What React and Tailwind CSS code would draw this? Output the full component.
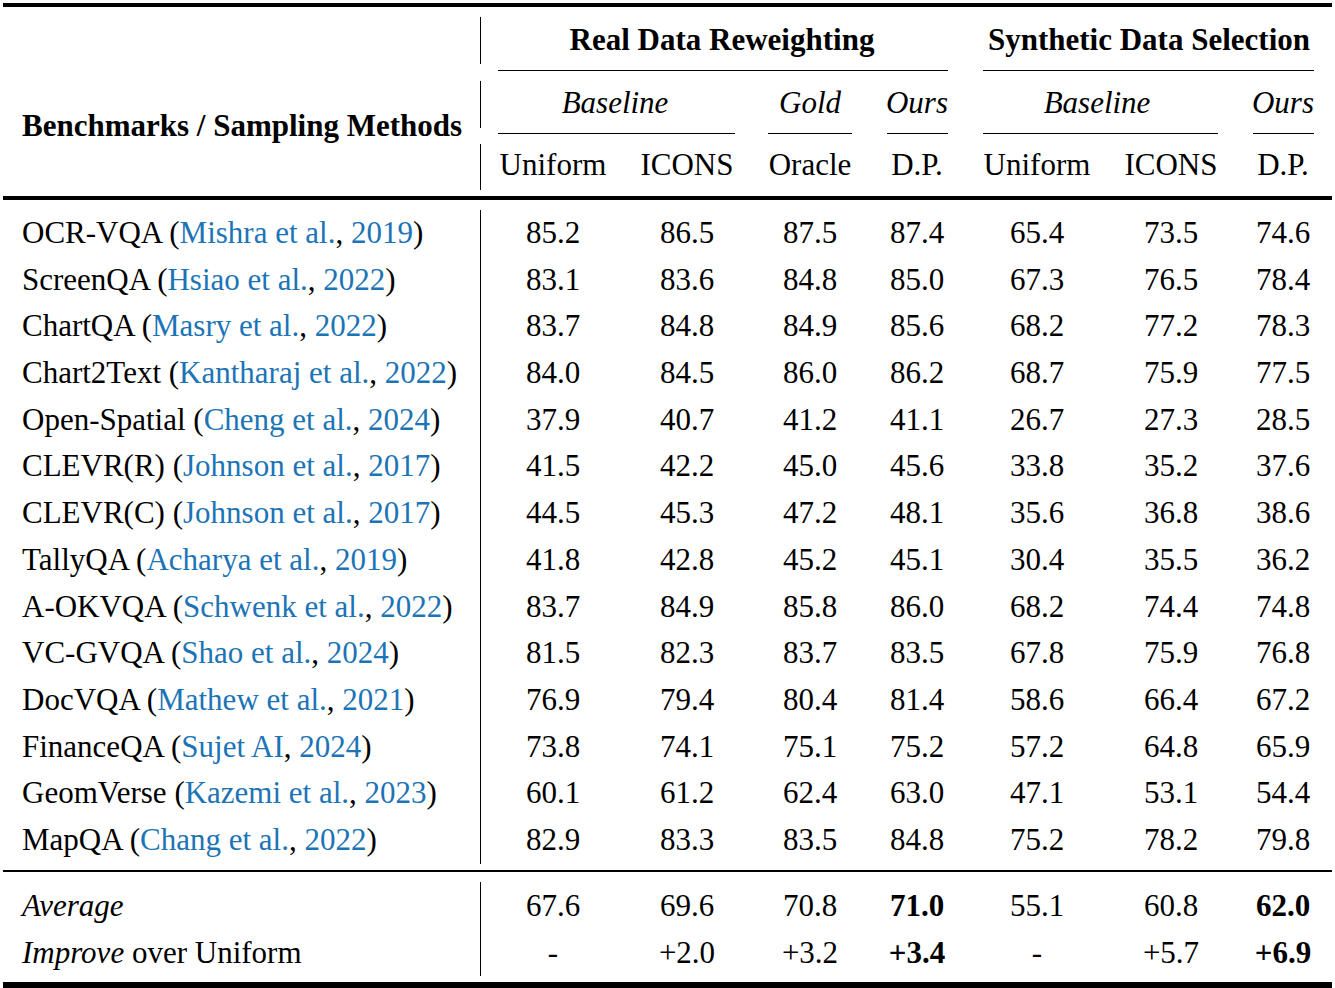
import React from 'react';

const cols = 'grid grid-cols-[144px_124px_122px_92px_148px_120px_104px]';
const rowCols = 'grid grid-cols-[481px_144px_124px_122px_92px_148px_120px_104px]';

const rows = [
  ['OCR-VQA', 'Mishra et al.', '2019', ['85.2', '86.5', '87.5', '87.4', '65.4', '73.5', '74.6']],
  ['ScreenQA', 'Hsiao et al.', '2022', ['83.1', '83.6', '84.8', '85.0', '67.3', '76.5', '78.4']],
  ['ChartQA', 'Masry et al.', '2022', ['83.7', '84.8', '84.9', '85.6', '68.2', '77.2', '78.3']],
  ['Chart2Text', 'Kantharaj et al.', '2022', ['84.0', '84.5', '86.0', '86.2', '68.7', '75.9', '77.5']],
  ['Open-Spatial', 'Cheng et al.', '2024', ['37.9', '40.7', '41.2', '41.1', '26.7', '27.3', '28.5']],
  ['CLEVR(R)', 'Johnson et al.', '2017', ['41.5', '42.2', '45.0', '45.6', '33.8', '35.2', '37.6']],
  ['CLEVR(C)', 'Johnson et al.', '2017', ['44.5', '45.3', '47.2', '48.1', '35.6', '36.8', '38.6']],
  ['TallyQA', 'Acharya et al.', '2019', ['41.8', '42.8', '45.2', '45.1', '30.4', '35.5', '36.2']],
  ['A-OKVQA', 'Schwenk et al.', '2022', ['83.7', '84.9', '85.8', '86.0', '68.2', '74.4', '74.8']],
  ['VC-GVQA', 'Shao et al.', '2024', ['81.5', '82.3', '83.7', '83.5', '67.8', '75.9', '76.8']],
  ['DocVQA', 'Mathew et al.', '2021', ['76.9', '79.4', '80.4', '81.4', '58.6', '66.4', '67.2']],
  ['FinanceQA', 'Sujet AI', '2024', ['73.8', '74.1', '75.1', '75.2', '57.2', '64.8', '65.9']],
  ['GeomVerse', 'Kazemi et al.', '2023', ['60.1', '61.2', '62.4', '63.0', '47.1', '53.1', '54.4']],
  ['MapQA', 'Chang et al.', '2022', ['82.9', '83.3', '83.5', '84.8', '75.2', '78.2', '79.8']],
];

const summary = [
  [<><i>Average</i></>, ['67.6', '69.6', '70.8', '71.0', '55.1', '60.8', '62.0']],
  [<><i>Improve</i> over Uniform</>, ['-', '+2.0', '+3.2', '+3.4', '-', '+5.7', '+6.9']],
];

function Cite({ who, year }) {
  return (
    <>
      (<span className="text-[#1c74b6]">{who}</span>, <span className="text-[#1c74b6]">{year}</span>)
    </>
  );
}

export default function App() {
  return (
    <div className="w-[1335px] h-[988px] bg-white text-black text-[31px] overflow-hidden pt-[3px]" style={{ fontFamily: '"Liberation Serif", "Times New Roman", serif' }}>
      <div className="mx-[3px] h-[4px] bg-black" />

      {/* header */}
      <div className="flex h-[189px]">
        <div className="flex w-[481px]">
          <div className="flex-1 pl-[22px] pt-[96px] leading-[46px] font-bold whitespace-nowrap">
            Benchmarks / Sampling Methods
          </div>
          <div className="flex flex-col w-[1.5px]">
            <div className="h-[64px] pt-[10px] pb-[7px]"><div className="h-full bg-black" /></div>
            <div className="h-[63px] pt-[10px] pb-[6px]"><div className="h-full bg-black" /></div>
            <div className="h-[62px] pt-[10px] pb-[6px]"><div className="h-full bg-black" /></div>
          </div>
        </div>
        <div className={`${cols} grid-rows-[63px_1px_62px_1px_62px] flex-1`}>
          <div className="col-span-4 flex items-center justify-center pt-[3px] font-bold">Real Data Reweighting</div>
          <div className="col-span-3 flex items-center justify-center pt-[3px] font-bold">Synthetic Data Selection</div>

          <div className="col-span-4 ml-[17px] mr-[15px] bg-black" />
          <div className="col-span-3 ml-[20px] mr-[21px] bg-black" />

          <div className="col-span-2 flex items-center justify-center pt-[3px] italic">Baseline</div>
          <div className="flex items-center justify-center pt-[3px] italic">Gold</div>
          <div className="flex items-center justify-center pt-[3px] italic">Ours</div>
          <div className="col-span-2 flex items-center justify-center pt-[3px] italic">Baseline</div>
          <div className="flex items-center justify-center pt-[3px] italic">Ours</div>

          <div className="col-span-2 ml-[17px] mr-[14px] bg-black" />
          <div className="ml-[19px] mr-[19px] bg-black" />
          <div className="ml-[16px] mr-[15px] bg-black" />
          <div className="col-span-2 ml-[20px] mr-[13px] bg-black" />
          <div className="ml-[22px] mr-[21px] bg-black" />

          {['Uniform', 'ICONS', 'Oracle', 'D.P.', 'Uniform', 'ICONS', 'D.P.'].map((h, i) => (
            <div key={i} className="flex items-center justify-center pt-[1px]">{h}</div>
          ))}
        </div>
      </div>

      <div className="mx-[3px] h-[4px] bg-black" />

      {/* body */}
      <div className="pt-[10px] pb-[6px]">
        {rows.map(([name, who, year, vals]) => (
          <div key={name} className={`${rowCols} h-[46.7px] leading-[46.7px]`}>
            <div className="pl-[22px] border-r-[1.5px] border-black whitespace-nowrap">
              {name} <Cite who={who} year={year} />
            </div>
            {vals.map((v, i) => (
              <div key={i} className="text-center">{v}</div>
            ))}
          </div>
        ))}
      </div>

      <div className="mx-[3px] h-[2px] bg-black" />

      <div className="pt-[10px] pb-[6px]">
        {summary.map(([label, vals], r) => (
          <div key={r} className={`${rowCols} h-[47px] leading-[47px]`}>
            <div className="pl-[22px] border-r-[1.5px] border-black whitespace-nowrap">{label}</div>
            {vals.map((v, i) => (
              <div key={i} className={`text-center ${i === 3 || i === 6 ? 'font-bold' : ''}`}>{v}</div>
            ))}
          </div>
        ))}
      </div>

      <div className="mx-[3px] h-[6px] bg-black" />
    </div>
  );
}
